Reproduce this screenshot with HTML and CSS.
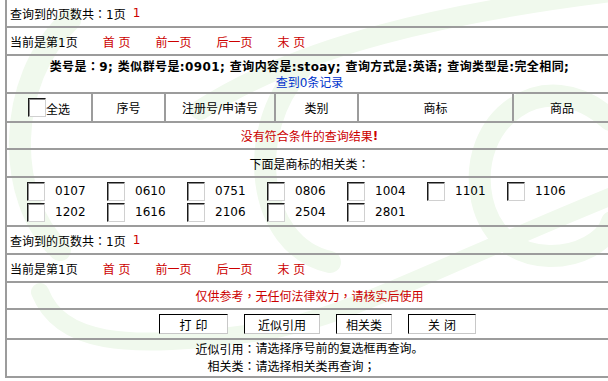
FILE: index.html
```html
<!DOCTYPE html>
<html>
<head>
    <meta charset="utf-8">
    <title>商标查询结果</title>
    <link rel="stylesheet" href="styles.css">
</head>
<body>
    <svg class="watermark" width="608" height="381" viewBox="0 0 608 381">
        <g fill="none" stroke="#f0f9ed" stroke-linecap="round">
            <path d="M 70 20 C 5 80, 5 200, 60 250" stroke-width="22"/>
            <path d="M 300 70 C 245 130, 255 245, 330 262" stroke-width="22"/>
            <path d="M 610 120 C 545 60, 465 120, 482 200 C 500 280, 600 262, 612 222" stroke-width="22"/>
            <path d="M 40 292 C 60 342, 120 352, 260 332 C 350 317, 430 270, 612 196" stroke-width="18"/>
            <path d="M 200 110 C 300 45, 450 12, 612 -8" stroke-width="20"/>
        </g>
    </svg>

    <div class="page">
        <div class="row pager">
            <span>查询到的页数共<span class="fw">：</span>1页</span>
            <span class="red count">1</span>
        </div>
        <div class="row pager">
            <span>当前是第1页</span>
            <a class="red" href="#">首 页</a>
            <a class="red" href="#">前一页</a>
            <a class="red" href="#">后一页</a>
            <a class="red" href="#">末 页</a>
        </div>
        <div class="row summary">
            <b class="query">类号是<span class="fw">：</span>9; 类似群号是:0901; 查询内容是:stoay; 查询方式是:英语; 查询类型是:完全相同;</b>
            <a class="blue" href="#">查到0条记录</a>
        </div>
        <div class="row head">
            <div class="cell"><input type="checkbox" class="box"><span class="all">全选</span></div>
            <div class="cell">序号</div>
            <div class="cell">注册号/申请号</div>
            <div class="cell">类别</div>
            <div class="cell">商标</div>
            <div class="cell">商品</div>
        </div>
        <div class="row msg red">没有符合条件的查询结果<b>!</b></div>
        <div class="row msg">下面是商标的相关类<span class="fw">：</span></div>
        <div class="row classes">
            <div class="class-grid">
                <label class="item"><input type="checkbox" class="box"><span>0107</span></label>
                <label class="item"><input type="checkbox" class="box"><span>0610</span></label>
                <label class="item"><input type="checkbox" class="box"><span>0751</span></label>
                <label class="item"><input type="checkbox" class="box"><span>0806</span></label>
                <label class="item"><input type="checkbox" class="box"><span>1004</span></label>
                <label class="item"><input type="checkbox" class="box"><span>1101</span></label>
                <label class="item"><input type="checkbox" class="box"><span>1106</span></label>
                <label class="item"><input type="checkbox" class="box"><span>1202</span></label>
                <label class="item"><input type="checkbox" class="box"><span>1616</span></label>
                <label class="item"><input type="checkbox" class="box"><span>2106</span></label>
                <label class="item"><input type="checkbox" class="box"><span>2504</span></label>
                <label class="item"><input type="checkbox" class="box"><span>2801</span></label>
            </div>
        </div>
        <div class="row pager">
            <span>查询到的页数共<span class="fw">：</span>1页</span>
            <span class="red count">1</span>
        </div>
        <div class="row pager">
            <span>当前是第1页</span>
            <a class="red" href="#">首 页</a>
            <a class="red" href="#">前一页</a>
            <a class="red" href="#">后一页</a>
            <a class="red" href="#">末 页</a>
        </div>
        <div class="row msg red">仅供参考<span class="fw">，</span>无任何法律效力<span class="fw">，</span>请核实后使用</div>
        <div class="row buttons">
            <button class="btn btn-print">打 印</button>
            <button class="btn btn-near">近似引用</button>
            <button class="btn btn-rel">相关类</button>
            <button class="btn btn-close">关 闭</button>
        </div>
        <div class="row notes">
            <div class="note-grid">
                <span class="label">近似引用<span class="fw">：</span></span><span>请选择序号前的复选框再查询。</span>
                <span class="label">相关类<span class="fw">：</span></span><span>请选择相关类再查询<span class="fw">；</span></span>
            </div>
        </div>
    </div>
</body>
</html>
```

FILE: styles.css
```css
body {
    margin: 0;
    background-color: #fff;
    font-family: "DejaVu Sans", "Noto Sans CJK SC", sans-serif;
    font-size: 12px;
    color: #000;
    overflow: hidden;
}

.watermark {
    position: absolute;
    left: 0;
    top: 0;
    z-index: -1;
}

/* full-width punctuation, centred in its cell */
.fw {
    font-family: "Noto Sans CJK TC", sans-serif;
}

.page {
    margin-left: 5px;
    width: 605px;
    border-left: 2px solid #9c9c9c;
}

.row {
    border-bottom: 2px solid #9c9c9c;
    box-sizing: border-box;
}

.red {
    color: #cc0000;
}

.blue {
    color: #0033cc;
}

a {
    text-decoration: none;
}

.pager {
    height: 28px;
    display: flex;
    align-items: center;
    gap: 25px;
    padding-left: 3px;
    white-space: nowrap;
}

.pager .count {
    margin-left: -18px;
}

.summary {
    height: 38px;
    display: flex;
    flex-direction: column;
    align-items: center;
    justify-content: center;
    line-height: 16px;
    padding-top: 1px;
    white-space: nowrap;
}

.query {
    letter-spacing: 0.4px;
}

.head {
    height: 29px;
    display: grid;
    grid-template-columns: 86px 73px 110px 83px 155px 96px;
}

.head .cell {
    display: flex;
    align-items: center;
    justify-content: center;
    border-right: 2px solid #9c9c9c;
}

.head .cell:last-child {
    border-right: none;
}

.head .all {
    align-self: flex-end;
    margin-bottom: 4px;
}

.msg {
    height: 27px;
    display: flex;
    align-items: center;
    justify-content: center;
}

.msg + .msg {
    height: 28px;
}

.box {
    appearance: none;
    -webkit-appearance: none;
    width: 18px;
    height: 19px;
    margin: 0;
    box-sizing: border-box;
    background-color: #fff;
    border-top: 1px solid #1a1a1a;
    border-left: 1px solid #1a1a1a;
    border-right: 1px solid #d0d0d0;
    border-bottom: 1px solid #d0d0d0;
    box-shadow: inset 1px 1px 0 #8c8c8c;
}

.classes {
    height: 49px;
    padding-top: 3px;
    padding-left: 20px;
}

.class-grid {
    display: grid;
    grid-template-columns: repeat(7, 80px);
    row-gap: 1px;
}

.item {
    display: flex;
    align-items: center;
    gap: 10px;
    height: 20px;
}

.buttons {
    height: 30px;
    display: flex;
    align-items: center;
    justify-content: center;
    gap: 16px;
    padding-left: 16px;
}

.btn {
    height: 20px;
    padding: 0;
    font-family: "DejaVu Sans", "Noto Sans CJK SC", sans-serif;
    font-size: 12px;
    background-color: #fff;
    border-top: 1px solid #000;
    border-left: 1px solid #000;
    border-right: 1px solid #c8c8c8;
    border-bottom: 1px solid #c8c8c8;
}

.btn-print { width: 69px; }
.btn-near { width: 76px; }
.btn-rel { width: 56px; }
.btn-close { width: 68px; }

.notes {
    height: 38px;
    display: flex;
    justify-content: center;
    align-items: center;
}

.note-grid {
    display: grid;
    grid-template-columns: auto auto;
    line-height: 16px;
}

.note-grid .label {
    text-align: right;
}
```
